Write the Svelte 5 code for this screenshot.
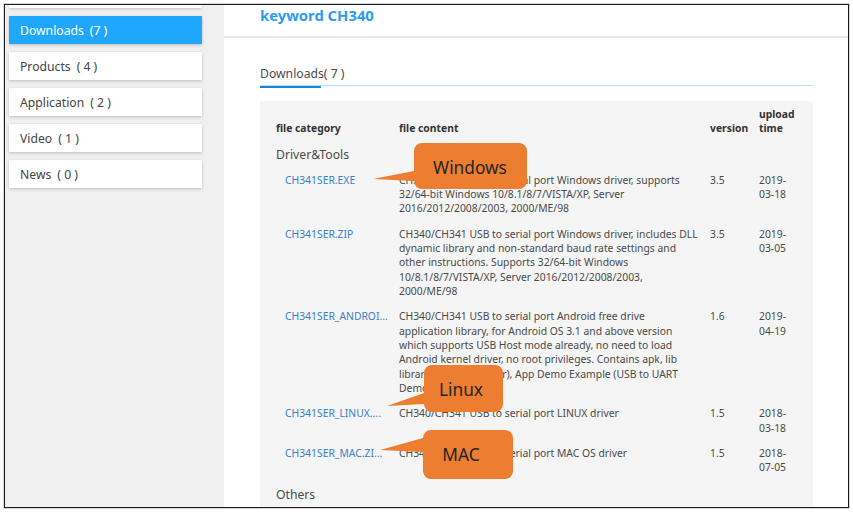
<script>
  const menu = [
    { label: 'Downloads', count: '(7 )', active: true },
    { label: 'Products', count: '( 4 )' },
    { label: 'Application', count: '( 2 )' },
    { label: 'Video', count: '( 1 )' },
    { label: 'News', count: '( 0 )' }
  ];

  const rows = [
    {
      name: 'CH341SER.EXE',
      text: 'CH340/CH341 USB to serial port Windows driver, supports 32/64-bit Windows 10/8.1/8/7/VISTA/XP, Server 2016/2012/2008/2003, 2000/ME/98',
      version: '3.5',
      date: '2019-03-18'
    },
    {
      name: 'CH341SER.ZIP',
      text: 'CH340/CH341 USB to serial port Windows driver, includes DLL dynamic library and non-standard baud rate settings and other instructions. Supports 32/64-bit Windows 10/8.1/8/7/VISTA/XP, Server 2016/2012/2008/2003, 2000/ME/98',
      version: '3.5',
      date: '2019-03-05'
    },
    {
      name: 'CH341SER_ANDROI...',
      text: 'CH340/CH341 USB to serial port Android free drive application library, for Android OS 3.1 and above version which supports USB Host mode already, no need to load Android kernel driver, no root privileges. Contains apk, lib library file (Java Driver), App Demo Example (USB to UART Demo)',
      version: '1.6',
      date: '2019-04-19'
    },
    {
      name: 'CH341SER_LINUX....',
      text: 'CH340/CH341 USB to serial port LINUX driver',
      version: '1.5',
      date: '2018-03-18'
    },
    {
      name: 'CH341SER_MAC.ZI...',
      text: 'CH340/CH341 USB to serial port MAC OS driver',
      version: '1.5',
      date: '2018-07-05'
    }
  ];

  // callouts sit over the table, coordinates are page pixels
  const callouts = [
    { label: 'Windows', path: 'M422 143H519a8 8 0 0 1 8 8V181a8 8 0 0 1 -8 8H422a8 8 0 0 1 -8 -8L373 179L414 171V151a8 8 0 0 1 8 -8Z', x: 470, y: 174 },
    { label: 'Linux', path: 'M432 365H495a8 8 0 0 1 8 8V404a8 8 0 0 1 -8 8H432a8 8 0 0 1 -8 -8L387 406L424 393V373a8 8 0 0 1 8 -8Z', x: 461, y: 396 },
    { label: 'MAC', path: 'M431 430H505a8 8 0 0 1 8 8V471a8 8 0 0 1 -8 8H431a8 8 0 0 1 -8 -8V452L380 450L423 438a8 8 0 0 1 8 -8Z', x: 461, y: 461 }
  ];
</script>

<div class="page">
  <div class="frame">
    <aside class="side">
      <div class="stub"></div>
      {#each menu as item}
        <a class="item" class:active={item.active} href="#top">{item.label}<span class="count">{item.count}</span></a>
      {/each}
    </aside>

    <main class="main">
      <h2 class="keyword">keyword CH340</h2>
      <div class="body">
        <div class="tabs"><span class="tab">Downloads( 7 )</span></div>
        <div class="panel">
          <table>
            <colgroup>
              <col class="c1" /><col class="c2" /><col class="c3" /><col class="c4" />
            </colgroup>
            <thead>
              <tr>
                <th>file category</th>
                <th>file content</th>
                <th>version</th>
                <th class="time">upload time</th>
              </tr>
            </thead>
            <tbody>
              <tr><td class="group" colspan="4">Driver&amp;Tools</td></tr>
              {#each rows as row}
                <tr>
                  <td class="name"><a href="#top">{row.name}</a></td>
                  <td>{row.text}</td>
                  <td>{row.version}</td>
                  <td class="time">{row.date}</td>
                </tr>
              {/each}
              <tr><td class="group" colspan="4">Others</td></tr>
            </tbody>
          </table>
        </div>
      </div>
    </main>
  </div>

  <svg class="notes" width="853" height="512" viewBox="0 0 853 512">
    {#each callouts as c}
      <path d={c.path} fill="#ed7d31" />
      <text x={c.x} y={c.y} text-anchor="middle">{c.label}</text>
    {/each}
  </svg>
</div>

<style>
  :global(body) {
    margin: 0;
    background: #fff;
  }

  .page {
    position: relative;
    width: 853px;
    height: 512px;
    overflow: hidden;
    padding: 4px;
    box-sizing: border-box;
    font-family: "Noto Sans", "Open Sans", sans-serif;
    color: #4a4a4a;
  }

  .frame {
    display: flex;
    height: 504px;
    box-sizing: border-box;
    border: 1px solid #1c1c1c;
    box-shadow: 0 0 0 1px #d8d8d8;
    overflow: hidden;
    background: #f0f0f0;
  }

  .side {
    width: 219px;
    flex: none;
    padding-left: 4px;
    box-sizing: border-box;
  }

  .stub {
    width: 193px;
    height: 3px;
    margin-bottom: 8px;
    background: #fff;
    box-shadow: 0 1px 3px rgba(0, 0, 0, 0.2);
  }

  .item {
    display: block;
    width: 193px;
    height: 28px;
    margin-bottom: 8px;
    padding-left: 11px;
    box-sizing: border-box;
    background: #fff;
    color: #444;
    font-size: 12.2px;
    line-height: 30px;
    text-decoration: none;
    box-shadow: 0 1px 3px rgba(0, 0, 0, 0.22);
  }

  .item.active {
    background: #1ea7fd;
    color: #fff;
  }

  .count {
    margin-left: 6px;
    white-space: pre;
  }

  .main {
    flex: 1;
    background: #fff;
    min-width: 0;
  }

  .keyword {
    margin: 0;
    height: 33px;
    padding: 0 0 0 36px;
    box-sizing: border-box;
    border-bottom: 2px solid #e3e8ed;
    color: #2d9cf0;
    font-size: 14.8px;
    font-weight: 700;
    line-height: 20px;
  }

  .body {
    padding: 23px 35px 0 36px;
  }

  .tabs {
    height: 24px;
    border-bottom: 1px solid #b3dcff;
  }

  .tab {
    display: inline-block;
    height: 24px;
    box-sizing: border-box;
    width: 61px;
    white-space: nowrap;
    border-bottom: 2px solid #1a84d8;
    font-size: 12.2px;
    line-height: 20px;
  }

  .panel {
    margin-top: 15px;
    height: 420px;
    background: #f5f5f5;
    padding-left: 11px;
  }

  table {
    width: 537px;
    table-layout: fixed;
    border-collapse: collapse;
    font-size: 10.35px;
    line-height: 14.3px;
  }

  .c1 { width: 123px; }
  .c2 { width: 311px; }
  .c3 { width: 49px; }
  .c4 { width: 54px; }

  th {
    padding: 6px 5px 10px;
    vertical-align: bottom;
    text-align: left;
    color: #333;
    font-weight: 700;
  }

  td {
    padding: 0 5px 11.2px;
    vertical-align: top;
  }

  th.time,
  td.time {
    padding-right: 13px;
  }

  td.group {
    padding-bottom: 9px;
    font-size: 12.2px;
    line-height: 18px;
  }

  td.name {
    padding-left: 14px;
    white-space: nowrap;
  }

  .name a {
    color: #3a80c8;
    text-decoration: none;
  }

  .notes {
    position: absolute;
    left: 0;
    top: 0;
    pointer-events: none;
  }

  .notes text {
    font-family: "Noto Sans", sans-serif;
    font-size: 17.3px;
    fill: #262626;
  }
</style>
